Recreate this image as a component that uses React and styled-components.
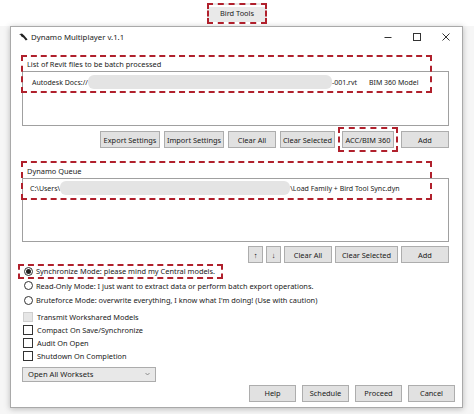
import styled, { createGlobalStyle } from "styled-components";

const GlobalStyle = createGlobalStyle`
  html, body {
    margin: 0;
    padding: 0;
    background: #fff;
  }
  * { box-sizing: border-box; }
`;

const Page = styled.div`
  position: relative;
  width: 474px;
  height: 414px;
  overflow: hidden;
  font-family: "Noto Sans", "Liberation Sans", sans-serif;
  font-size: 7.4px;
  color: #1a1a1a;
  background: linear-gradient(#fff 0 26px, #f6f6f6 26px);
`;

const TopBar = styled.div`
  height: 26px;
  display: flex;
  align-items: flex-end;
  padding-left: 207px;
  padding-bottom: 2px;
`;

const Tab = styled.div`
  width: 60px;
  height: 21px;
  border: 2px dashed #b0202c;
  display: flex;
  justify-content: center;
  padding-top: 3px;
  background: linear-gradient(#fff 0 2px, #e9e9e9 2px);
  font-size: 7.4px;
`;

const Window = styled.div`
  margin-left: 10px;
  width: 453px;
  height: 382px;
  background: #fff;
  border: 1px solid #a9a9a9;
  box-shadow: 0 1px 6px rgba(0, 0, 0, 0.25);
  display: flex;
  flex-direction: column;
`;

const TitleBar = styled.div`
  height: 20px;
  display: flex;
  align-items: center;
  padding: 0 2px 0 8px;
  gap: 3px;
  font-size: 7.8px;
`;

const Title = styled.span`
  flex: 1;
`;

const Controls = styled.div`
  display: flex;
  align-items: center;
`;

const Control = styled.div`
  width: 29px;
  display: flex;
  justify-content: center;
  align-items: center;
`;

const Body = styled.div`
  flex: 1;
  display: flex;
  flex-direction: column;
  padding: 10px 13px 0 11px;
`;

const Section = styled.div`
  position: relative;
  display: flex;
  flex-direction: column;
`;

const Label = styled.div`
  height: 14px;
  padding-left: 5px;
  display: flex;
  align-items: center;
`;

const ListBox = styled.div`
  height: ${(p) => p.$h}px;
  border: 1px solid #a0a0a0;
  background: #fff;
  padding: ${(p) => p.$pt}px 0 0 ${(p) => p.$pl}px;
  font-size: 7px;
`;

const FileRow = styled.div`
  height: 14px;
  display: flex;
  align-items: center;
  white-space: nowrap;
`;

const Blur = styled.span`
  width: ${(p) => p.$w}px;
  height: 14px;
  border-radius: 6px;
  background: #e4e4e4;
  filter: blur(0.6px);
`;

const Gap = styled.span`
  width: ${(p) => p.$w}px;
`;

const Marker = styled.div`
  position: absolute;
  left: ${(p) => p.$l}px;
  top: ${(p) => p.$t}px;
  width: ${(p) => p.$w}px;
  height: ${(p) => p.$h}px;
  border: 2px dashed #b0202c;
  pointer-events: none;
`;

const ButtonRow = styled.div`
  display: flex;
  justify-content: flex-end;
  gap: ${(p) => p.$gap || 4}px;
  margin-top: ${(p) => p.$mt || 4}px;
`;

const Button = styled.button`
  width: ${(p) => p.$w}px;
  height: 17px;
  margin: 0;
  padding: 0;
  border: 1px solid #adadad;
  background: #e1e1e1;
  font-family: inherit;
  font-size: 7.4px;
  color: #1a1a1a;
  white-space: nowrap;
  outline: ${(p) => (p.$marked ? "2px dashed #b0202c" : "none")};
  outline-offset: 2px;
`;

const Options = styled.div`
  display: flex;
  flex-direction: column;
  margin-top: 1px;
  padding-left: 2px;
`;

const Radio = styled.label`
  height: 14.5px;
  display: flex;
  align-items: center;
  gap: 3px;
  width: fit-content;
  padding: 0 8px 0 6px;
  margin-left: -6px;
  outline: ${(p) => (p.$marked ? "2px dashed #b0202c" : "none")};
  outline-offset: -2px;
`;

const Dot = styled.span`
  width: 9px;
  height: 9px;
  border-radius: 50%;
  border: 1px solid #333;
  display: flex;
  align-items: center;
  justify-content: center;
  &::after {
    content: "";
    width: 5px;
    height: 5px;
    border-radius: 50%;
    background: ${(p) => (p.$on ? "#222" : "transparent")};
  }
`;

const Checks = styled.div`
  display: flex;
  flex-direction: column;
  margin-top: 3px;
`;

const Check = styled.label`
  height: 13px;
  display: flex;
  align-items: center;
  gap: 4px;
  padding-left: 1px;
`;

const Box = styled.span`
  width: 10px;
  height: 10px;
  border: 1px solid ${(p) => (p.$disabled ? "#cfcfcf" : "#333")};
  background: ${(p) => (p.$disabled ? "#e6e6e6" : "#fff")};
`;

const Footer = styled.div`
  display: flex;
  justify-content: space-between;
  align-items: flex-start;
  margin-top: 4px;
  margin-right: -6px;
`;

const Select = styled.div`
  width: 134px;
  height: 15px;
  border: 1px solid #acacac;
  background: #e8e8e8;
  display: flex;
  align-items: center;
  justify-content: space-between;
  padding: 0 5px;
  font-size: 7.6px;
`;

const FooterButtons = styled.div`
  display: flex;
  gap: 6px;
  margin-top: 18px;
`;

const Bird = () => (
  <svg width="9" height="8" viewBox="0 0 9 8">
    <path d="M0 1.2 L3 0.4 L5.2 2.6 L8.6 6.6 L6.8 7.4 L4.6 4.8 L2.4 3.4 L1.4 1.8 Z" fill="#222" />
  </svg>
);

const App = () => {
  return (
    <Page>
      <GlobalStyle />
      <TopBar>
        <Tab>Bird Tools</Tab>
      </TopBar>
      <Window>
        <TitleBar>
          <Bird />
          <Title>Dynamo Multiplayer v.1.1</Title>
          <Controls>
            <Control>
              <svg width="8" height="8" viewBox="0 0 8 8">
                <path d="M0.5 4.5 H7.5" stroke="#333" strokeWidth="1" />
              </svg>
            </Control>
            <Control>
              <svg width="8" height="8" viewBox="0 0 8 8">
                <rect x="0.5" y="0.5" width="7" height="7" fill="none" stroke="#333" strokeWidth="1" />
              </svg>
            </Control>
            <Control>
              <svg width="8" height="8" viewBox="0 0 8 8">
                <path d="M0.5 0.5 L7.5 7.5 M7.5 0.5 L0.5 7.5" stroke="#333" strokeWidth="1" />
              </svg>
            </Control>
          </Controls>
        </TitleBar>
        <Body>
          <Section>
            <Label>List of Revit files to be batch processed</Label>
            <ListBox $h={55} $pt={3} $pl={9}>
              <FileRow>
                <span>Autodesk Docs://</span>
                <Blur $w={244} />
                <span>-001.rvt</span>
                <Gap $w={12} />
                <span>BIM 360 Model</span>
              </FileRow>
            </ListBox>
            <Marker $l={-1} $t={-2} $w={411} $h={38} />
          </Section>
          <ButtonRow $mt={5}>
            <Button $w={60}>Export Settings</Button>
            <Button $w={60}>Import Settings</Button>
            <Button $w={48}>Clear All</Button>
            <Button $w={55}>Clear Selected</Button>
            <Button $w={52} $marked style={{ marginLeft: 3, marginRight: 3 }}>
              ACC/BIM 360
            </Button>
            <Button $w={48}>Add</Button>
          </ButtonRow>
          <Section style={{ marginTop: 16 }}>
            <Label>Dynamo Queue</Label>
            <ListBox $h={64} $pt={2} $pl={7}>
              <FileRow>
                <span>C:\Users\</span>
                <Blur $w={230} />
                <span>\Load Family + Bird Tool Sync.dyn</span>
              </FileRow>
            </ListBox>
            <Marker $l={-1} $t={-3} $w={411} $h={39} />
          </Section>
          <ButtonRow $mt={4} $gap={3}>
            <Button $w={15}>↑</Button>
            <Button $w={15}>↓</Button>
            <Button $w={48}>Clear All</Button>
            <Button $w={63}>Clear Selected</Button>
            <Button $w={48}>Add</Button>
          </ButtonRow>
          <Options>
            <Radio $marked>
              <Dot $on />
              Synchronize Mode: please mind my Central models.
            </Radio>
            <Radio>
              <Dot />
              Read-Only Mode: I just want to extract data or perform batch export operations.
            </Radio>
            <Radio>
              <Dot />
              Bruteforce Mode: overwrite everything, I know what I'm doing! (Use with caution)
            </Radio>
          </Options>
          <Checks>
            <Check>
              <Box $disabled />
              Transmit Workshared Models
            </Check>
            <Check>
              <Box />
              Compact On Save/Synchronize
            </Check>
            <Check>
              <Box />
              Audit On Open
            </Check>
            <Check>
              <Box />
              Shutdown On Completion
            </Check>
          </Checks>
          <Footer>
            <Select>
              Open All Worksets
              <svg width="5" height="4" viewBox="0 0 5 4">
                <path d="M0.5 1 L2.5 3 L4.5 1" fill="none" stroke="#777" strokeWidth="0.8" />
              </svg>
            </Select>
            <FooterButtons>
              <Button $w={47}>Help</Button>
              <Button $w={47}>Schedule</Button>
              <Button $w={47}>Proceed</Button>
              <Button $w={47}>Cancel</Button>
            </FooterButtons>
          </Footer>
        </Body>
      </Window>
    </Page>
  );
};

export default App;
